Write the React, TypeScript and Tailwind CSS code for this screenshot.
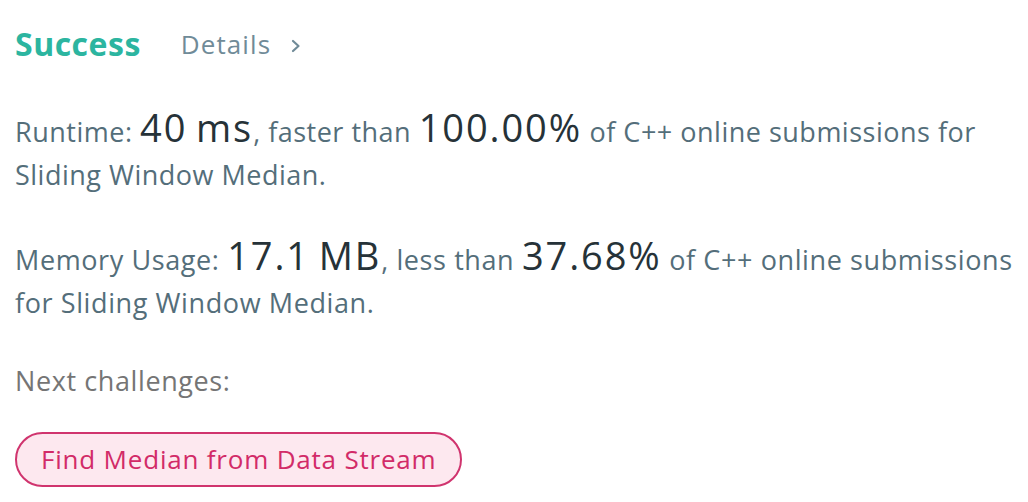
// Submission result panel: status header, runtime/memory stats, next challenge pill.
function Chevron() {
  return (
    <svg viewBox="0 0 10 14" className="ml-[20px] mt-[3px] w-[10px] h-[14px]" fill="none">
      <path d="M2 2l5.5 5L2 12" stroke="currentColor" strokeWidth="2.2" strokeLinecap="round" strokeLinejoin="round" />
    </svg>
  );
}

function Big({ children }: { children: React.ReactNode }) {
  return <span className="text-[38px] tracking-[1.9px] [word-spacing:-3px] text-[#263238]">{children}</span>;
}

export default function App() {
  return (
    <div className="w-[1028px] h-[502px] bg-white pl-[15px] pt-[22px] font-['Open_Sans',sans-serif] text-[#546e7a] tracking-[0.6px]">
      <div className="flex items-center h-[44px]">
        <span className="text-[32px] font-bold tracking-[0.5px] text-[#2cb5a0]">Success</span>
        <span className="ml-[40px] flex items-center text-[26px] tracking-[1.1px] text-[#708b98]">
          Details
          <Chevron />
        </span>
      </div>

      <p className="mt-[40px] text-[27px] leading-[43px] tracking-[0.5px] w-[1000px]">
        Runtime: <Big>40 ms</Big>, faster than <Big>100.00%</Big> of C++ online submissions for
        Sliding Window Median.
      </p>

      <p className="mt-[38px] text-[27px] leading-[43px] w-[1012px]">
        Memory Usage: <Big>17.1 MB</Big>, less than <Big>37.68%</Big> of C++ online submissions
        for Sliding Window Median.
      </p>

      <p className="mt-[37px] text-[27px] text-[#757575]">Next challenges:</p>

      <div className="mt-[30px] flex">
        <span className="rounded-full border-2 border-[#d0346e] bg-[#fde8ef] px-[24px] h-[55px] flex items-center text-[26px] tracking-[0.8px] text-[#d22b68]">
          Find Median from Data Stream
        </span>
      </div>
    </div>
  );
}
